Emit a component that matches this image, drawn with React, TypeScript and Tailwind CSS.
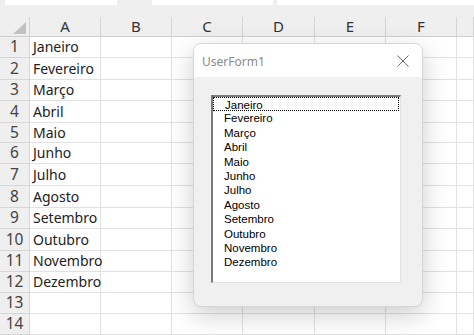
import React from 'react'

const cols = ['A', 'B', 'C', 'D', 'E', 'F', '']

const months = [
  'Janeiro', 'Fevereiro', 'Março', 'Abril', 'Maio', 'Junho',
  'Julho', 'Agosto', 'Setembro', 'Outubro', 'Novembro', 'Dezembro',
]

// row heights, px (integer so grid lines stay crisp)
const rowHeights = ['h-[21px]', 'h-[22px]', 'h-[21px]', 'h-[22px]', 'h-[20px]', 'h-[21px]', 'h-[22px]', 'h-[22px]', 'h-[21px]', 'h-[22px]', 'h-[21px]', 'h-[21px]', 'h-[21px]', 'h-[21px]']

const gridCols = 'grid grid-cols-[30px_71px_71px_71px_72px_71px_71px_1fr]'

function Sheet() {
  return (
    <div className="flex flex-col" style={{ fontFamily: '"Noto Sans", sans-serif' }}>
      {/* formula bar remnants */}
      <div className="flex h-[5px] bg-[#eeeeee]">
        <div className="ml-[5px] w-[112px] bg-white" />
        <div className="ml-[35px] w-[121px] bg-white" />
        <div className="ml-[4px] flex-1 bg-white" />
      </div>
      <div className="h-[12px] bg-[#efefef]" />
      {/* column headers */}
      <div className={`${gridCols} h-[20px] bg-[#efefef] border-b border-[#cfcfcf]`}>
        <div className="relative border-r border-[#d4d4d4]">
          <div className="absolute left-[13px] top-[5px] w-0 h-0 border-l-[13px] border-l-transparent border-b-[12px] border-b-[#c2c2c2]" />
        </div>
        {cols.map((c, i) => (
          <div key={i} className="flex items-center justify-center border-r border-[#d4d4d4] text-[15px] text-[#333] leading-none">
            {c}
          </div>
        ))}
      </div>
      {rowHeights.map((h, r) => (
        <div key={r} className={`${gridCols} ${h}`}>
          <div className="flex items-center justify-center bg-[#efefef] border-r border-b border-[#d6d6d6] text-[15.5px] text-[#444] leading-none">
            {r + 1}
          </div>
          {cols.map((_, c) => (
            <div key={c} className="flex items-center pl-[3px] border-r border-b border-[#e1e1e1] text-[14px] text-[#222] leading-none whitespace-nowrap">
              {c === 0 && r < 12 ? months[r] : ''}
            </div>
          ))}
        </div>
      ))}
    </div>
  )
}

function UserForm() {
  return (
    <div className="absolute left-[193px] top-[43px] w-[230px] h-[264px] rounded-[8px] border border-[#d6d6d6] bg-[#f0f0f0] shadow-[0_8px_26px_rgba(0,0,0,0.2)] overflow-hidden flex flex-col">
      <div className="h-[33px] bg-white flex items-center justify-between pl-[8px] pr-[13px]">
        <span className="text-[12px] text-[#8a8a8a] mt-[2px]" style={{ fontFamily: '"Noto Sans", sans-serif' }}>UserForm1</span>
        <svg width="12" height="12" viewBox="0 0 12 12">
          <path d="M0.5 0.5 L11.5 11.5 M11.5 0.5 L0.5 11.5" stroke="#6f6f6f" strokeWidth="1" fill="none" />
        </svg>
      </div>
      <div className="pt-[18px] pl-[17px]">
        <div className="w-[190px] h-[188px] border-t-2 border-l-2 border-t-[#7a7a7a] border-l-[#7a7a7a] border-b border-r border-b-[#e3e3e3] border-r-[#e3e3e3] bg-white" style={{ fontFamily: '"Liberation Sans", Arial, sans-serif' }}>
          {months.map((m, i) => (
            <div
              key={m}
              className={`h-[14.4px] leading-[14.4px] pl-[11px] text-[11.5px] text-black ${i === 0 ? 'border border-dotted border-black pl-[10px] mr-[1px] leading-[12.4px]' : ''}`}
            >
              {m}
            </div>
          ))}
        </div>
      </div>
    </div>
  )
}

export default function App() {
  return (
    <div className="relative w-[474px] h-[335px] overflow-hidden bg-white">
      <Sheet />
      <UserForm />
    </div>
  )
}
